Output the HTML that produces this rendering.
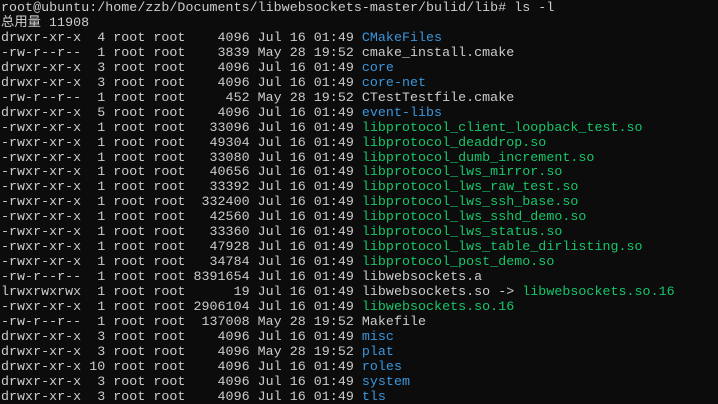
<!DOCTYPE html>
<html><head><meta charset="utf-8"><style>
html,body{margin:0;padding:0;background:#0c0c0c;width:718px;height:404px;overflow:hidden}
pre{margin:0;padding:1px 0 0 1px;font-family:"Liberation Mono","Noto Sans CJK SC",monospace;font-size:13.3px;letter-spacing:0.04px;line-height:14.95px;color:#cccccc;white-space:pre}
.b{color:#3a96dd}.g{color:#16c66a}
</style></head><body><pre>root@ubuntu:/home/zzb/Documents/libwebsockets-master/bulid/lib# ls -l
总用量 11908
drwxr-xr-x  4 root root    4096 Jul 16 01:49 <span class="b">CMakeFiles</span>
-rw-r--r--  1 root root    3839 May 28 19:52 cmake_install.cmake
drwxr-xr-x  3 root root    4096 Jul 16 01:49 <span class="b">core</span>
drwxr-xr-x  3 root root    4096 Jul 16 01:49 <span class="b">core-net</span>
-rw-r--r--  1 root root     452 May 28 19:52 CTestTestfile.cmake
drwxr-xr-x  5 root root    4096 Jul 16 01:49 <span class="b">event-libs</span>
-rwxr-xr-x  1 root root   33096 Jul 16 01:49 <span class="g">libprotocol_client_loopback_test.so</span>
-rwxr-xr-x  1 root root   49304 Jul 16 01:49 <span class="g">libprotocol_deaddrop.so</span>
-rwxr-xr-x  1 root root   33080 Jul 16 01:49 <span class="g">libprotocol_dumb_increment.so</span>
-rwxr-xr-x  1 root root   40656 Jul 16 01:49 <span class="g">libprotocol_lws_mirror.so</span>
-rwxr-xr-x  1 root root   33392 Jul 16 01:49 <span class="g">libprotocol_lws_raw_test.so</span>
-rwxr-xr-x  1 root root  332400 Jul 16 01:49 <span class="g">libprotocol_lws_ssh_base.so</span>
-rwxr-xr-x  1 root root   42560 Jul 16 01:49 <span class="g">libprotocol_lws_sshd_demo.so</span>
-rwxr-xr-x  1 root root   33360 Jul 16 01:49 <span class="g">libprotocol_lws_status.so</span>
-rwxr-xr-x  1 root root   47928 Jul 16 01:49 <span class="g">libprotocol_lws_table_dirlisting.so</span>
-rwxr-xr-x  1 root root   34784 Jul 16 01:49 <span class="g">libprotocol_post_demo.so</span>
-rw-r--r--  1 root root 8391654 Jul 16 01:49 libwebsockets.a
lrwxrwxrwx  1 root root      19 Jul 16 01:49 libwebsockets.so -&gt; <span class="g">libwebsockets.so.16</span>
-rwxr-xr-x  1 root root 2906104 Jul 16 01:49 <span class="g">libwebsockets.so.16</span>
-rw-r--r--  1 root root  137008 May 28 19:52 Makefile
drwxr-xr-x  3 root root    4096 Jul 16 01:49 <span class="b">misc</span>
drwxr-xr-x  3 root root    4096 May 28 19:52 <span class="b">plat</span>
drwxr-xr-x 10 root root    4096 Jul 16 01:49 <span class="b">roles</span>
drwxr-xr-x  3 root root    4096 Jul 16 01:49 <span class="b">system</span>
drwxr-xr-x  3 root root    4096 Jul 16 01:49 <span class="b">tls</span>
</pre></body></html>
